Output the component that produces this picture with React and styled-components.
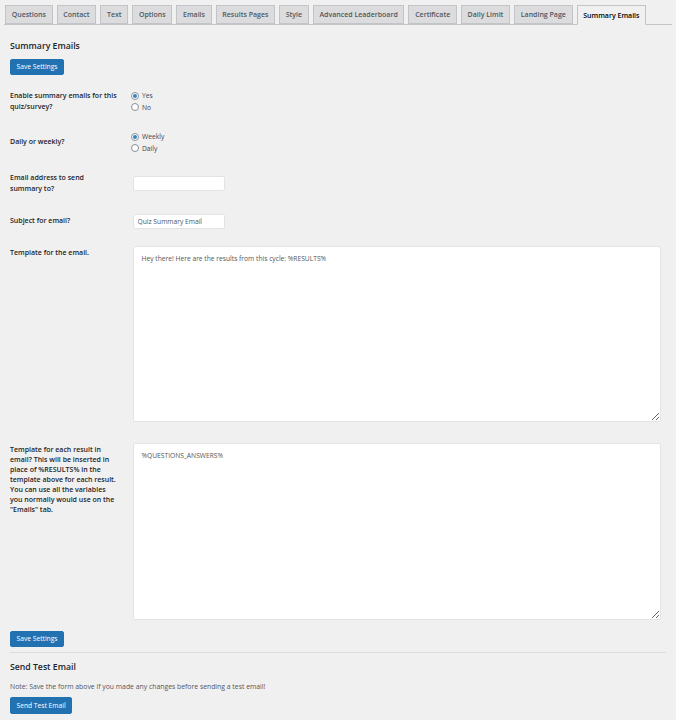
import React, { useState } from 'react';
import styled, { createGlobalStyle } from 'styled-components';

const GlobalStyle = createGlobalStyle`
  html, body {
    margin: 0;
    padding: 0;
    background: #f0f0f1;
  }
  body {
    font-family: "Open Sans", "Noto Sans", sans-serif;
    color: #3c434a;
  }
`;

const Page = styled.div`
  padding: 5px 4px 0 4px;
  min-height: 720px;
  box-sizing: border-box;
`;

const TabBar = styled.div`
  display: flex;
  gap: 4px;
  padding-left: 1px;
  border-bottom: 1px solid #c3c4c7;
  height: 19px;
`;

const Tab = styled.div`
  box-sizing: border-box;
  height: ${p => (p.$active ? '20px' : '19px')};
  padding: 0 5.7px;
  display: flex;
  align-items: center;
  font-size: 7px;
  font-weight: 600;
  white-space: nowrap;
  color: ${p => (p.$active ? '#000' : '#50575e')};
  background: ${p => (p.$active ? '#f0f0f1' : '#dcdcde')};
  border: 1px solid #c3c4c7;
  border-bottom-color: ${p => (p.$active ? '#f0f0f1' : '#c3c4c7')};
`;

const Content = styled.div`
  padding: 0 6px;
`;

const Heading = styled.h2`
  margin: ${p => p.$mt} 0 0 0;
  font-size: 8.7px;
  line-height: 11px;
  font-weight: 600;
  color: #1d2327;
`;

const Button = styled.button`
  box-sizing: border-box;
  height: 16.5px;
  margin-top: ${p => p.$mt || '0'};
  padding: 0 5.5px;
  font-family: inherit;
  font-size: 6.7px;
  color: #fff;
  background: #2271b1;
  border: 1px solid #2271b1;
  border-radius: 2px;
  cursor: pointer;
  display: block;
`;

const Form = styled.div`
  margin-top: 5px;
`;

const Row = styled.div`
  display: grid;
  grid-template-columns: 121px 1fr;
  align-items: ${p => (p.$top ? 'start' : 'center')};
`;

const Label = styled.div`
  padding: ${p => (p.$top ? '10.5px 0 0 0' : '11px 0 11px 0')};
  font-size: 7px;
  line-height: ${p => (p.$tight ? '10px' : '10.5px')};
  font-weight: 600;
  white-space: nowrap;
  color: #1d2327;
`;

const Field = styled.div`
  padding: 8px 0 ${p => p.$pb || '8px'} 0;
`;

const RadioGroup = styled.div`
  display: flex;
  flex-direction: column;
`;

const RadioRow = styled.label`
  display: flex;
  align-items: center;
  height: 11.5px;
  gap: 3px;
  font-size: 6.7px;
  color: #3c434a;
  cursor: pointer;
`;

const RadioDot = styled.span`
  box-sizing: border-box;
  width: 8px;
  height: 8px;
  border-radius: 50%;
  border: 1px solid #8c8f94;
  background: #fff;
  display: flex;
  align-items: center;
  justify-content: center;

  &::after {
    content: '';
    width: 4px;
    height: 4px;
    border-radius: 50%;
    background: ${p => (p.$checked ? '#3582c4' : 'transparent')};
  }
`;

const TextInput = styled.input`
  box-sizing: border-box;
  display: block;
  width: 92px;
  height: 15.5px;
  margin-left: 1.5px;
  padding: 0 4px;
  font-family: inherit;
  font-size: 6.7px;
  color: #50575e;
  background: #fff;
  border: 1px solid #e2e3e5;
  border-radius: 2px;
  outline: none;
`;

const TextArea = styled.textarea`
  box-sizing: border-box;
  display: block;
  width: 528px;
  height: ${p => p.$h};
  margin-left: 1.5px;
  padding: 7px 8px;
  font-family: inherit;
  font-size: 6.7px;
  line-height: 10px;
  color: #50575e;
  background: #fff;
  border: 1px solid #e2e3e5;
  border-radius: 2px;
  outline: none;
  resize: vertical;
`;

const Divider = styled.hr`
  margin: 4.5px 0 0 0;
  border: 0;
  border-top: 1px solid #dcdcde;
`;

const Note = styled.p`
  margin: 8.5px 0 0 0;
  font-size: 6.85px;
  line-height: 10px;
  color: #50575e;
`;

const tabs = [
  'Questions', 'Contact', 'Text', 'Options', 'Emails', 'Results Pages', 'Style',
  'Advanced Leaderboard', 'Certificate', 'Daily Limit', 'Landing Page', 'Summary Emails',
];

function Lines({ lines }) {
  return lines.map((l, i) => (
    <React.Fragment key={i}>
      {i > 0 && <br />}
      {l}
    </React.Fragment>
  ));
}

function Radios({ options, value, onChange }) {
  return (
    <RadioGroup>
      {options.map(opt => (
        <RadioRow key={opt} onClick={() => onChange(opt)}>
          <RadioDot $checked={value === opt} />
          {opt}
        </RadioRow>
      ))}
    </RadioGroup>
  );
}

export default function App() {
  const [enabled, setEnabled] = useState('Yes');
  const [freq, setFreq] = useState('Weekly');

  return (
    <Page>
      <GlobalStyle />
      <TabBar>
        {tabs.map(t => (
          <Tab key={t} $active={t === 'Summary Emails'}>{t}</Tab>
        ))}
      </TabBar>
      <Content>
        <Heading $mt="15.5px">Summary Emails</Heading>
        <Button $mt="7px">Save Settings</Button>
        <Form>
          <Row>
            <Label><Lines lines={['Enable summary emails for this', 'quiz/survey?']} /></Label>
            <Field>
              <Radios options={['Yes', 'No']} value={enabled} onChange={setEnabled} />
            </Field>
          </Row>
          <Row>
            <Label>Daily or weekly?</Label>
            <Field>
              <Radios options={['Weekly', 'Daily']} value={freq} onChange={setFreq} />
            </Field>
          </Row>
          <Row>
            <Label><Lines lines={['Email address to send', 'summary to?']} /></Label>
            <Field>
              <TextInput defaultValue="" />
            </Field>
          </Row>
          <Row>
            <Label>Subject for email?</Label>
            <Field>
              <TextInput defaultValue="Quiz Summary Email" />
            </Field>
          </Row>
          <Row $top>
            <Label $top>Template for the email.</Label>
            <Field $pb="13px">
              <TextArea $h="176px" defaultValue="Hey there! Here are the results from this cycle: %RESULTS%" />
            </Field>
          </Row>
          <Row $top>
            <Label $top $tight>
              <Lines
                lines={[
                  'Template for each result in',
                  'email? This will be inserted in',
                  'place of %RESULTS% in the',
                  'template above for each result.',
                  'You can use all the variables',
                  'you normally would use on the',
                  '"Emails" tab.',
                ]}
              />
            </Label>
            <Field $pb="11px">
              <TextArea $h="177px" defaultValue="%QUESTIONS_ANSWERS%" />
            </Field>
          </Row>
        </Form>
        <Button>Save Settings</Button>
        <Divider />
        <Heading $mt="9.5px">Send Test Email</Heading>
        <Note>Note: Save the form above if you made any changes before sending a test email!</Note>
        <Button $mt="5.5px">Send Test Email</Button>
      </Content>
    </Page>
  );
}
